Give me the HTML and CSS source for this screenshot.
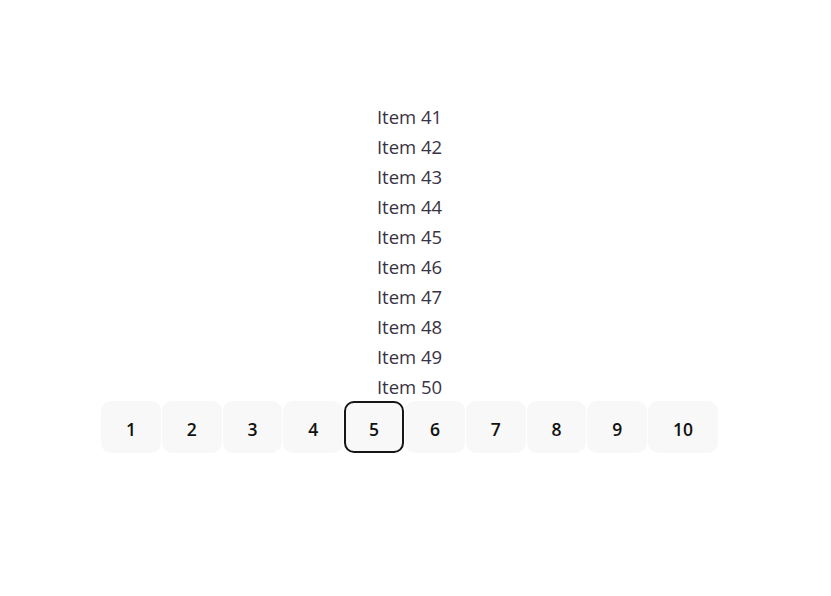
FILE: index.html
```html
<!DOCTYPE html>
<html>
<head>
<meta charset="utf-8">
<link rel="stylesheet" href="styles.css">
</head>
<body>
<div class="wrap">
  <ul class="items">
    <li>Item 41</li>
    <li>Item 42</li>
    <li>Item 43</li>
    <li>Item 44</li>
    <li>Item 45</li>
    <li>Item 46</li>
    <li>Item 47</li>
    <li>Item 48</li>
    <li>Item 49</li>
    <li>Item 50</li>
  </ul>
  <nav class="pager">
    <button class="page">1</button>
    <button class="page">2</button>
    <button class="page">3</button>
    <button class="page">4</button>
    <button class="page active">5</button>
    <button class="page">6</button>
    <button class="page">7</button>
    <button class="page">8</button>
    <button class="page">9</button>
    <button class="page">10</button>
  </nav>
</div>
</body>
</html>
```
FILE: styles.css
```css
html, body {
  margin: 0;
  padding: 0;
  background: #ffffff;
}
body {
  font-family: "Open Sans", "Noto Sans", sans-serif;
}
.wrap {
  display: flex;
  flex-direction: column;
  align-items: center;
  padding-top: 102px;
  padding-right: 12px;
}
.items {
  list-style: none;
  margin: 0;
  padding: 0;
  text-align: center;
}
.items li {
  font-size: 18.5px;
  line-height: 30px;
  color: #3a3344;
}
.pager {
  display: flex;
  gap: 1px;
  margin-top: -1px;
}
.page {
  font-family: "Open Sans", "Noto Sans", sans-serif;
  font-size: 17.5px;
  font-weight: 600;
  color: #111111;
  background: #f8f8f8;
  border: 2px solid transparent;
  border-radius: 10px;
  height: 52px;
  padding: 3px 22.9px 0;
  cursor: pointer;
}
.page.active {
  border-color: #161616;
}
```
